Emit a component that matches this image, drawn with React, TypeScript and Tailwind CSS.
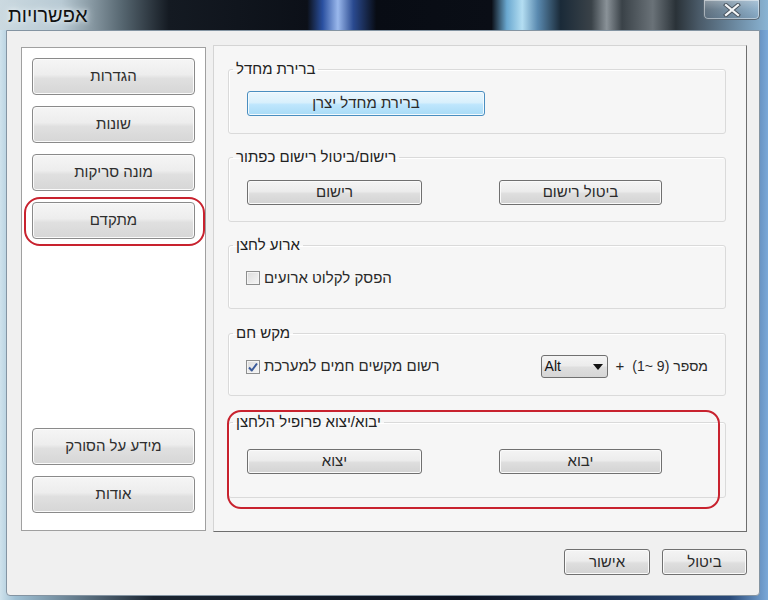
import React from "react";

const btn =
  "flex items-center justify-center rounded-[3px] border border-[#707070] bg-[linear-gradient(to_bottom,#f4f4f4_0%,#ececec_45%,#dedede_55%,#d3d3d3_100%)] shadow-[inset_0_0_0_1px_#fafafa] text-[15px] text-[#2a2a2a]";

const sideBtn =
  "flex items-center justify-center w-[163px] h-[37px] rounded-[4px] border border-[#8a8a8a] bg-[linear-gradient(to_bottom,#f5f5f5_0%,#ededed_45%,#e0e0e0_55%,#d6d6d6_100%)] shadow-[inset_0_0_0_1px_#fbfbfb] text-[15px] text-[#2e2e2e]";

function Group({
  title,
  h,
  className = "",
  children,
}: {
  title: string;
  h: string;
  className?: string;
  children: React.ReactNode;
}) {
  return (
    <fieldset
      className={`w-[498px] ${h} rounded-[3px] border border-[#dadada] shadow-[inset_1px_1px_0_#ffffff] ${className}`}
    >
      <legend className="ml-[4px] px-[3px] text-[15px] leading-[16px] text-[#222]">
        {title}
      </legend>
      {children}
    </fieldset>
  );
}

function CheckBox({ checked = false }: { checked?: boolean }) {
  return (
    <span className="flex h-[14px] w-[14px] items-center justify-center border border-[#8e8f8f] bg-[linear-gradient(135deg,#dcdcdc_0%,#f6f6f6_100%)] shadow-[inset_0_0_0_1px_#f4f4f4]">
      {checked && (
        <svg width="12" height="12" viewBox="0 0 12 12">
          <path
            d="M2 6.5 L4.8 9.5 L10 2.5"
            fill="none"
            stroke="#3a5a9a"
            strokeWidth="2"
            strokeLinejoin="round"
          />
        </svg>
      )}
    </span>
  );
}

export default function App() {
  return (
    <div className="flex h-[600px] w-[768px] flex-col overflow-hidden bg-[linear-gradient(to_right,#cfe2ec_0%,#9fc0d4_2%,#1a2430_20%,#0c1220_60%,#2a4a78_95%,#7aa8d8_100%)] font-['Liberation_Sans','DejaVu_Sans',sans-serif]">
      {/* title bar */}
      <div className="flex h-[30px] items-start bg-[linear-gradient(to_right,#cbd9e0_0%,#b8cad4_8%,#55656f_16%,#141a22_22%,#0c1018_40%,#2a50a0_42%,#9ab8ec_44%,#2a4a90_46%,#080c14_49%,#0a0e16_64%,#6aa8d0_66%,#b4def2_68%,#5a8ab0_70%,#1a2a38_73%,#3a4248_77%,#8a9298_79%,#3a4248_81%,#6a7278_85%,#2a3238_88%,#4a5a68_91%,#8ab4d4_100%)]">
        <span className="ml-[8px] mt-[4px] text-[20px] leading-[22px] text-[#111] [text-shadow:0_0_8px_#e8f0f4,0_0_4px_#e8f0f4]">
          אפשרויות
        </span>
        <div className="ml-auto mr-[8px] flex h-[20px] w-[57px] items-center justify-center rounded-b-[5px] border border-t-0 border-[#5a6874] bg-[linear-gradient(to_bottom,rgba(255,255,255,0.35)_0%,rgba(255,255,255,0.12)_50%,rgba(120,140,160,0.25)_100%)] shadow-[inset_0_0_0_1px_rgba(255,255,255,0.45)]">
          <svg width="18" height="14" viewBox="0 0 18 14">
            <path d="M3 2 L15 12 M15 2 L3 12" stroke="#4a5560" strokeWidth="4.2" strokeLinecap="square" />
            <path d="M3 2 L15 12 M15 2 L3 12" stroke="#f4f6f8" strokeWidth="2.2" strokeLinecap="square" />
          </svg>
        </div>
      </div>

      {/* window body */}
      <div className="mb-[4px] ml-[6px] mr-[8px] flex flex-1 flex-col rounded-b-[4px] border border-[#8494a2] bg-[#f0f0f0] pl-[14px] pr-[12px] pt-[14px]">
        <div className="flex items-start gap-[7px]">
          {/* left panel */}
          <div className="mt-[2px] flex h-[484px] w-[185px] flex-col gap-[11px] border border-[#a0a0a0] bg-white px-[10px] pb-[17px] pt-[10px]">
            <div className={sideBtn}>הגדרות</div>
            <div className={sideBtn}>שונות</div>
            <div className={sideBtn}>מונה סריקות</div>
            <div className="relative">
              <div className={sideBtn}>מתקדם</div>
              <div className="pointer-events-none absolute -bottom-[7px] -left-[8px] -right-[10px] -top-[5px] rounded-[16px] border-2 border-[#c8222e]" />
            </div>
            <div className="flex-1" />
            <div className={sideBtn}>מידע על הסורק</div>
            <div className={sideBtn}>אודות</div>
          </div>

          {/* right panel */}
          <div className="flex h-[487px] w-[534px] flex-col border border-[#d4d4d4] border-b-[#6e6e6e] border-r-[#6e6e6e] bg-[#f6f6f6] pl-[14px] pt-[15px]">
            <Group title="ברירת מחדל" h="h-[73px]">
              <div className="pl-[18px] pt-[14px]">
                <div className="flex h-[25px] w-[238px] items-center justify-center rounded-[3px] border border-[#4a8ec0] bg-[linear-gradient(to_bottom,#eaf6fd_0%,#d9f0fc_45%,#bee6fd_55%,#a9dbf6_100%)] shadow-[inset_0_0_0_1px_#f2fafe] text-[15px] text-[#2a2a2a]">
                  ברירת מחדל יצרן
                </div>
              </div>
            </Group>

            <Group title="רישום/ביטול רישום כפתור" h="h-[73px]" className="mt-[15px]">
              <div className="flex gap-[77px] pl-[18px] pt-[15px]">
                <div className={`${btn} h-[25px] w-[175px]`}>רישום</div>
                <div className={`${btn} h-[25px] w-[163px]`}>ביטול רישום</div>
              </div>
            </Group>

            <Group title="ארוע לחצן" h="h-[72px]" className="mt-[15px]">
              <div className="mt-[15px] flex h-[20px] items-center gap-[4px] pl-[17px]">
                <CheckBox />
                <span className="text-[15px] text-[#2a2a2a]">הפסק לקלוט ארועים</span>
              </div>
            </Group>

            <Group title="מקש חם" h="h-[71px]" className="mt-[16px]">
              <div className="mt-[14px] flex h-[23px] items-center pl-[17px] pr-[17px]">
                <CheckBox checked />
                <span className="ml-[4px] text-[15px] text-[#2a2a2a]">רשום מקשים חמים למערכת</span>
                <div className="flex-1" />
                <div className="flex h-[23px] w-[67px] items-center justify-between rounded-[3px] border border-[#707070] bg-[linear-gradient(to_bottom,#f4f4f4_0%,#ececec_45%,#dedede_55%,#d6d6d6_100%)] pl-[3px] pr-[4px] text-[14px] text-[#111]">
                  <span>Alt</span>
                  <svg width="10" height="6" viewBox="0 0 10 6">
                    <path d="M0 0 H10 L5 6 Z" fill="#111" />
                  </svg>
                </div>
                <span className="ml-[8px] text-[15px] text-[#2a2a2a]">+</span>
                <span className="ml-[8px] flex gap-[4px] text-[14px] text-[#2a2a2a]">
                  <span dir="ltr">(1~ 9)</span>
                  <span>מספר</span>
                </span>
              </div>
            </Group>

            <div className="relative mt-[18px] w-[498px]">
              <Group title="יבוא/יצוא פרופיל הלחצן" h="h-[84px]">
                <div className="flex gap-[77px] pl-[18px] pt-[19px]">
                  <div className={`${btn} h-[25px] w-[175px]`}>יצוא</div>
                  <div className={`${btn} h-[25px] w-[163px]`}>יבוא</div>
                </div>
              </Group>
              <div className="pointer-events-none absolute -bottom-[11px] -left-[1px] -top-[4px] right-[6px] rounded-[14px] border-[2.5px] border-[#c8222e]" />
            </div>
          </div>
        </div>

        {/* dialog buttons */}
        <div className="mt-[17px] flex justify-end gap-[12px]">
          <div className={`${btn} h-[26px] w-[86px]`}>אישור</div>
          <div className={`${btn} h-[26px] w-[85px]`}>ביטול</div>
        </div>
      </div>
    </div>
  );
}
